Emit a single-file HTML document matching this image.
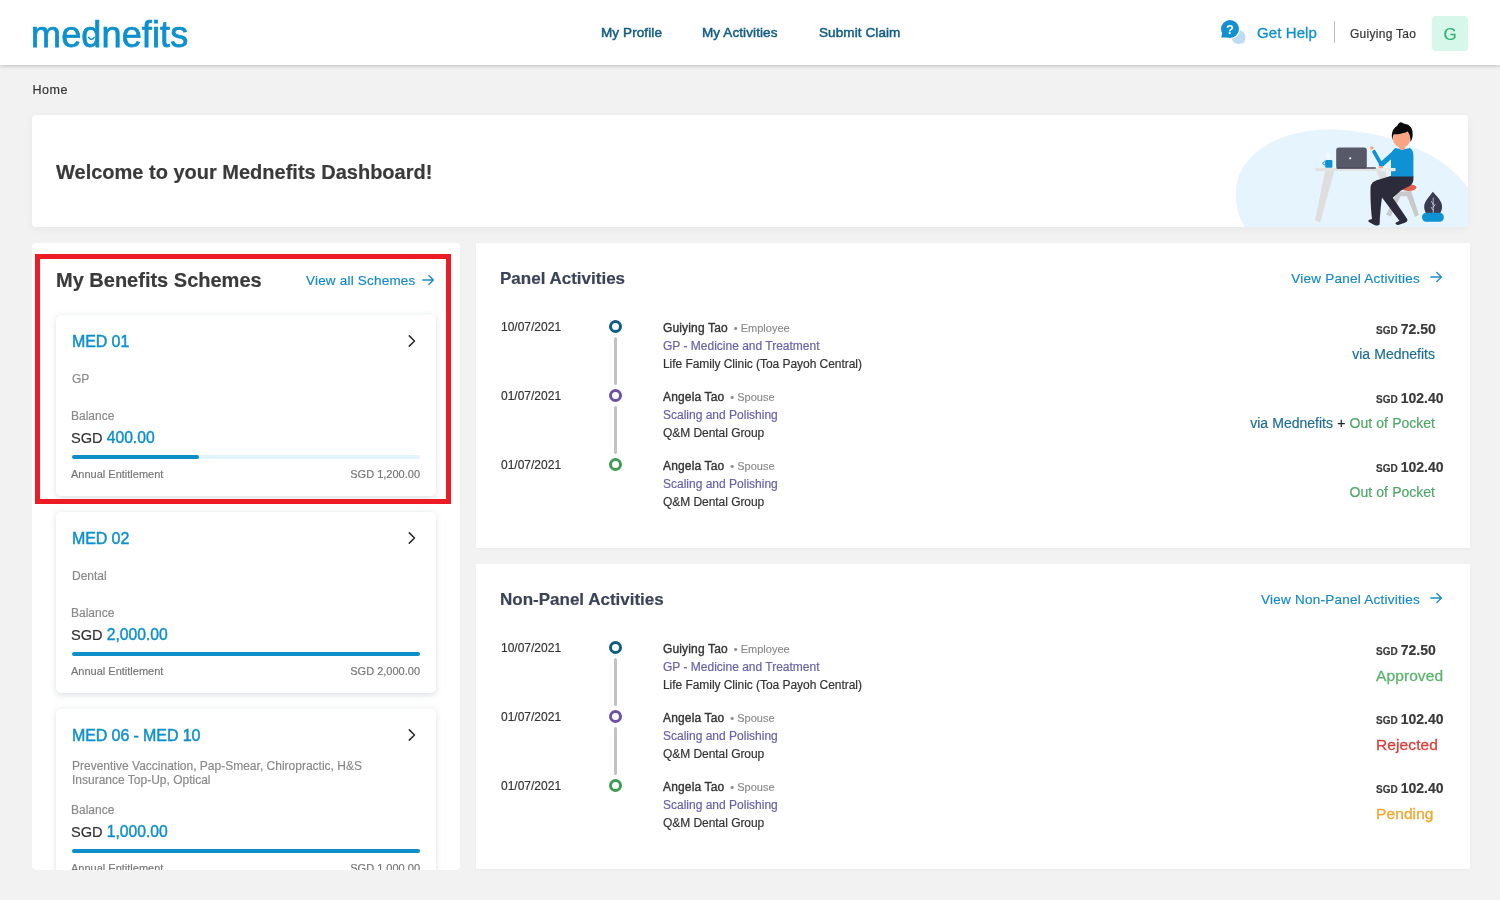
<!DOCTYPE html>
<html lang="en">
<head>
<meta charset="utf-8">
<title>Mednefits Dashboard</title>
<style>
*{box-sizing:border-box;margin:0;padding:0}
html,body{width:1500px;height:900px;overflow:hidden}
body{-webkit-text-stroke:.18px;background:#f2f2f2;font-family:"Liberation Sans",Arial,Helvetica,sans-serif;color:#333;position:relative;-webkit-font-smoothing:antialiased}
a{text-decoration:none;color:inherit}
#app{position:absolute;left:0;top:0;width:1500px;height:900px;will-change:transform}

/* header */
#hdr{position:absolute;left:0;top:0;width:1500px;height:65px;background:#fff;box-shadow:0 1px 4px rgba(0,0,0,.22)}
#logo{position:absolute;left:31px;top:13px;font-size:36px;line-height:44px;color:#0d90ce;letter-spacing:.15px;white-space:nowrap;-webkit-text-stroke:.75px #0d90ce}
#logo svg{position:absolute;left:0;top:0}
nav a{position:absolute;top:25px;font-size:13.5px;line-height:16px;color:#135e84;white-space:nowrap;letter-spacing:.1px;-webkit-text-stroke:.5px #135e84}
#help{position:absolute;left:1257px;top:23px;font-size:15px;line-height:20px;color:#0d90ce;white-space:nowrap;letter-spacing:.1px;-webkit-text-stroke:.3px #0d90ce}
#helpico{position:absolute;left:1216px;top:16px}
#sep{position:absolute;left:1334px;top:21px;width:1px;height:22px;background:#bdbdbd}
#uname{position:absolute;left:1350px;top:26px;font-size:12px;line-height:16px;color:#333;white-space:nowrap;letter-spacing:.27px}
#avatar{position:absolute;left:1432px;top:16px;width:36px;height:35px;border-radius:4px;background:#d6f7ea;color:#2fb46e;font-size:17px;line-height:37px;text-align:center}

#crumb{position:absolute;left:32.5px;top:82px;font-size:12.5px;line-height:16px;color:#333;letter-spacing:.5px}

/* banner */
#banner{position:absolute;left:32px;top:115px;width:1436px;height:112px;background:#fff;border-radius:4px;overflow:hidden;box-shadow:0 2px 8px rgba(0,0,0,.045)}
#banner h1{position:absolute;left:24px;top:45px;font-size:20px;line-height:24px;font-weight:bold;color:#3a3a3a;white-space:nowrap}
#banner svg{position:absolute;right:0;top:0}

/* left panel */
#left{position:absolute;left:32px;top:243px;width:428px;height:627px;background:#fff;border-radius:4px;overflow:hidden}
#left h2{position:absolute;left:24px;top:25px;font-size:20px;line-height:24px;font-weight:bold;color:#3a3a3a;white-space:nowrap}
#viewall{position:absolute;left:274px;top:29.6px;font-size:13.5px;line-height:16px;color:#168bc6;white-space:nowrap;letter-spacing:.2px}
.card{position:absolute;left:24px;width:380px;height:181px;background:#fff;border-radius:5px;box-shadow:0 1.5px 6px rgba(40,60,90,.16)}
.card .t{position:absolute;left:16px;top:18px;font-size:16px;line-height:18px;color:#0d90ce;white-space:nowrap;letter-spacing:-.1px;-webkit-text-stroke:.45px #0d90ce}
.card .chev{position:absolute;left:351px;top:19px}
.card .d{position:absolute;left:16px;top:57px;width:310px;font-size:12px;line-height:14px;color:#8a8a8a}
.card .bl{position:absolute;left:15px;top:94px;font-size:12px;line-height:14px;color:#8a8a8a}
.card .bv{position:absolute;left:15px;top:114px;font-size:14.6px;line-height:18px;color:#333;white-space:nowrap}
.card .bv b{font-weight:normal;font-size:15.7px;color:#0d90ce;-webkit-text-stroke:.4px #0d90ce}
.card .bar{position:absolute;left:16px;top:140px;width:348px;height:4px;border-radius:2px;background:#e3f5fc}
.card .bar i{position:absolute;left:0;top:0;height:4px;border-radius:2px;background:#0e8ec9}
.card .ae{position:absolute;left:15px;top:152px;font-size:11px;line-height:14px;color:#777}
.card .av{position:absolute;right:16px;top:152px;font-size:11px;line-height:14px;color:#777;white-space:nowrap}
#hl{position:absolute;left:35px;top:254px;width:416px;height:250px;border:5px solid #ed1c24;pointer-events:none}

/* right panels */
.panel{position:absolute;left:476px;width:994px;background:#fff;box-shadow:0 1px 3px rgba(0,0,0,.03)}
.panel h2{position:absolute;left:24px;top:26px;font-size:17px;line-height:20px;font-weight:bold;color:#3b4358;white-space:nowrap}
.arr{position:absolute}
.panel .va{position:absolute;right:50px;top:28px;font-size:13.5px;line-height:16px;color:#168bc6;white-space:nowrap;letter-spacing:.25px}
.row{position:absolute;left:0;width:994px;height:69px}
.row .dt{position:absolute;left:25px;top:-8px;font-size:12px;line-height:16px;color:#333}
.row .dot{position:absolute;left:133px;top:-7px;width:13px;height:13px;border-radius:50%;border:3.4px solid #0f5e82;background:#fff}
.row .ln{position:absolute;left:138px;top:10px;width:3px;height:48px;border-radius:2px;background:#c3c3c6}
.row .nm{position:absolute;left:187px;top:-7px;font-size:12px;line-height:16px;color:#333;white-space:nowrap;letter-spacing:.15px;-webkit-text-stroke:.38px #383838}
.row .nm span{font-size:11px;color:#8a8a8a;-webkit-text-stroke:.15px #8a8a8a;margin-left:6px;letter-spacing:0}
.row .sv{position:absolute;left:187px;top:11px;font-size:12px;line-height:16px;color:#6961ad;white-space:nowrap}
.row .cl{position:absolute;left:187px;top:29px;font-size:12px;line-height:16px;color:#333;white-space:nowrap;letter-spacing:-.05px}
.row .amt{position:absolute;left:900px;top:-7px;font-size:14px;line-height:18px;font-weight:bold;color:#3a3a3a;white-space:nowrap}
.row .amt small{font-size:10px;font-weight:bold;margin-right:3px}
.row .st{position:absolute;top:18px;font-size:14px;line-height:18px;white-space:nowrap}
.row .st.r{right:35px;word-spacing:.3px}
.row .st.l{left:900px;top:19px;font-size:15.5px;letter-spacing:.1px;-webkit-text-stroke:.3px currentColor}
.c-blue{color:#1d6d98}.c-green{color:#4ea768}.c-red{color:#d8413c}.c-org{color:#f0a72e}.c-grn2{color:#5bb56f}
</style>
</head>
<body>
<div id="app">

<header id="hdr">
  <div id="logo">mednefits<svg width="160" height="44" viewBox="0 0 160 44"><path d="M57.6 24.4Q60.4 28.6 63.2 24.4" fill="none" stroke="#0d90ce" stroke-width="1.5" stroke-linecap="round"/></svg></div>
  <nav>
    <a href="#" style="left:601px">My Profile</a>
    <a href="#" style="left:702px">My Activities</a>
    <a href="#" style="left:819px">Submit Claim</a>
  </nav>
  <svg id="helpico" width="34" height="32" viewBox="0 0 34 32"><circle cx="22.5" cy="21" r="7" fill="#bcdcf3"/><path d="M26 26 L28.6 27.8 L27.8 22 Z" fill="#bcdcf3"/><circle cx="14" cy="13" r="10.2" fill="#fff"/><circle cx="14" cy="13" r="9" fill="#1490d2"/><path d="M5.2 21.6 L6.6 15 L12 21.4 Z" fill="#1490d2"/><text x="14" y="17.6" font-family="Liberation Sans, sans-serif" font-size="13" font-weight="bold" fill="#fff" text-anchor="middle">?</text></svg>
  <a id="help" href="#">Get Help</a>
  <div id="sep"></div>
  <div id="uname">Guiying Tao</div>
  <div id="avatar">G</div>
</header>

<div id="crumb">Home</div>

<section id="banner">
  <h1>Welcome to your Mednefits Dashboard!</h1>
  <svg width="268" height="112" viewBox="1200 115 268 112">
    <path d="M1244 226C1236 212 1232 192 1240 173C1254 143 1294 129.3 1330 129.6C1372 130 1410 142 1440 161C1452 169 1462 179 1468 188L1468 227L1244.5 227Z" fill="#e5f4fd"/>
    <path d="M1325.1 170.7L1334.3 170.7L1320.2 222.6L1315.1 220.3Z" fill="#dedede"/>
    <path d="M1376.4 170.7L1385.4 170.7L1388.2 181.5L1380.5 181.5Z" fill="#dedede"/>
    <rect x="1315.3" y="167.9" width="76" height="3.2" rx="1.2" fill="#e2e2e2"/>
    <ellipse cx="1328" cy="155.5" rx="1.6" ry="3.6" fill="#fff" opacity=".55"/>
    <rect x="1325.2" y="160" width="7.2" height="7.8" rx="1" fill="#0f92d3"/>
    <circle cx="1324.4" cy="163.3" r="1.5" fill="none" stroke="#0f92d3" stroke-width="1"/>
    <rect x="1336.2" y="147.6" width="30.6" height="20.9" rx="2.6" fill="#575868"/>
    <rect x="1336.4" y="167.3" width="39.6" height="1.5" rx=".7" fill="#4b4c5b"/>
    <rect x="1349.3" y="157.4" width="1.8" height="1.8" fill="#fff"/>
    <path d="M1395.2 191.9L1411.1 190.9L1418.9 215.1L1415.0 216.8L1407.0 196.3L1400.6 196.3L1390.6 216.6L1386.2 214.6L1395.7 195.3Z" fill="#c9c9c9"/>
    <ellipse cx="1408.8" cy="187.6" rx="7.6" ry="3.3" fill="#e0604f"/>
    <path d="M1390.6 176.0L1413.4 176.0C1413.8 181.0 1412.8 184.0 1409.5 186.0L1401.0 190.4L1392.8 197.7L1407.2 219.0C1407.9 221.0 1407.0 221.9 1404.8 222.7L1398.2 224.9C1396.2 224.9 1395.0 223.9 1395.7 222.7L1399.4 220.7L1381.8 197.2C1380.8 194.8 1381.5 192.1 1383.5 190.4C1381.8 196.3 1380.5 208.5 1379.8 220.5L1379.6 224.6C1378.3 225.9 1375.9 225.6 1374.4 224.9L1368.8 221.9C1367.8 220.7 1368.6 219.7 1370.3 219.5L1372.0 219.0C1370.8 208.5 1370.3 196.3 1370.5 187.9C1370.8 183.4 1373.5 181.0 1378.3 179.8Z" fill="#2c2b3c"/>
    <path d="M1395.6 148.0C1399.7 149.3 1406.1 149.3 1409.7 148.0C1412.5 149.3 1413.4 152.1 1413.4 155.9L1413.4 176.6L1391.0 176.6L1391.0 158.5C1391.0 153.3 1392.7 149.5 1395.6 148.0Z" fill="#0f92d3"/>
    <rect x="1380" y="168.1" width="15.6" height="3.1" rx="1" fill="#ebebeb"/>
    <path d="M1396.1 151.3L1381.3 164.6" fill="none" stroke="#0f92d3" stroke-width="5" stroke-linecap="round"/>
    <path d="M1381.3 164.6L1374.1 151.8" fill="none" stroke="#0f92d3" stroke-width="3.7" stroke-linecap="round"/>
    <circle cx="1371.8" cy="148.0" r="1.8" fill="#f9a584"/>
    <ellipse cx="1380.8" cy="167.1" rx="2.6" ry="1.1" fill="#f9a584"/>
    <rect x="1399.2" y="143" width="6" height="7" rx="2.5" fill="#f9a584"/>
    <ellipse cx="1401.7" cy="138.6" rx="8.7" ry="8.9" fill="#f9a584"/>
    <path d="M1392.3 140.1C1391.0 134.2 1392.3 128.4 1397.1 125.9C1398.2 123.3 1400.3 121.6 1401.7 122.4C1403.8 123.9 1405.1 123.4 1406.3 124.2C1408.6 124.2 1412.0 127.1 1412.5 131.6C1413.2 136.1 1412.2 139.9 1410.4 142.1C1410.7 138.0 1409.9 134.2 1407.6 131.4C1402.2 134.2 1395.9 134.2 1393.8 134.2C1393.0 136.1 1392.5 138.0 1392.3 140.1Z" fill="#0b0b0d"/>
    <path d="M1432.9 191.7C1437.4 196.8 1442.1 201.3 1442.1 206.4C1442.1 210.2 1440.6 212.8 1439.3 214.1L1426.8 214.1C1425.3 212.4 1424.0 209.8 1424.2 206.0C1424.6 200.9 1429.1 196.8 1432.9 191.7Z" fill="#3b3a50"/>
    <path d="M1433.2 198.1L1433.2 213.4M1433.2 204.5L1431.4 201.4M1433.2 207.3L1435.0 204.5M1433.2 210.2L1431.1 207.3" fill="none" stroke="#e6e8f0" stroke-width=".7" stroke-linecap="round"/>
    <rect x="1422" y="212.8" width="21.8" height="9" rx="4.2" fill="#0f92d3"/>
  </svg>
</section>

<section id="left">
  <h2>My Benefits Schemes</h2>
  <a id="viewall" href="#">View all Schemes</a><svg class="arr" style="left:390px;top:31px" width="13" height="12" viewBox="0 0 13 12"><path d="M.8 6H11.3M6.8 1.4L11.4 6L6.8 10.6" fill="none" stroke="#1f8dc6" stroke-width="1.35" stroke-linecap="round" stroke-linejoin="round"/></svg>

  <div class="card" style="top:72px">
    <div class="t">MED 01</div><svg class="chev" width="10" height="14" viewBox="0 0 10 14"><path d="M2.3 1.9L7.5 7L2.3 12.1" fill="none" stroke="#2a2a2a" stroke-width="1.5" stroke-linecap="round" stroke-linejoin="round"/></svg>
    <div class="d">GP</div>
    <div class="bl">Balance</div>
    <div class="bv">SGD <b>400.00</b></div>
    <div class="bar"><i style="width:127px"></i></div>
    <div class="ae">Annual Entitlement</div>
    <div class="av">SGD 1,200.00</div>
  </div>
  <div class="card" style="top:269px">
    <div class="t">MED 02</div><svg class="chev" width="10" height="14" viewBox="0 0 10 14"><path d="M2.3 1.9L7.5 7L2.3 12.1" fill="none" stroke="#2a2a2a" stroke-width="1.5" stroke-linecap="round" stroke-linejoin="round"/></svg>
    <div class="d">Dental</div>
    <div class="bl">Balance</div>
    <div class="bv">SGD <b>2,000.00</b></div>
    <div class="bar"><i style="width:348px"></i></div>
    <div class="ae">Annual Entitlement</div>
    <div class="av">SGD 2,000.00</div>
  </div>
  <div class="card" style="top:466px">
    <div class="t">MED 06 - MED 10</div><svg class="chev" width="10" height="14" viewBox="0 0 10 14"><path d="M2.3 1.9L7.5 7L2.3 12.1" fill="none" stroke="#2a2a2a" stroke-width="1.5" stroke-linecap="round" stroke-linejoin="round"/></svg>
    <div class="d" style="top:50px">Preventive Vaccination, Pap-Smear, Chiropractic, H&amp;S Insurance Top-Up, Optical</div>
    <div class="bl">Balance</div>
    <div class="bv">SGD <b>1,000.00</b></div>
    <div class="bar"><i style="width:348px"></i></div>
    <div class="ae">Annual Entitlement</div>
    <div class="av">SGD 1,000.00</div>
  </div>
</section>
<div id="hl"></div>

<section class="panel" style="top:243px;height:305px">
  <h2>Panel Activities</h2>
  <a class="va" href="#">View Panel Activities</a><svg class="arr" style="left:954px;top:28.4px" width="13" height="12" viewBox="0 0 13 12"><path d="M.8 6H11.3M6.8 1.4L11.4 6L6.8 10.6" fill="none" stroke="#1f8dc6" stroke-width="1.35" stroke-linecap="round" stroke-linejoin="round"/></svg>
  <div class="row" style="top:84px">
    <div class="dt">10/07/2021</div><div class="dot"></div><div class="ln"></div>
    <div class="nm">Guiying Tao<span>• Employee</span></div>
    <div class="sv">GP - Medicine and Treatment</div>
    <div class="cl">Life Family Clinic (Toa Payoh Central)</div>
    <div class="amt"><small>SGD</small>72.50</div>
    <div class="st r c-blue">via Mednefits</div>
  </div>
  <div class="row" style="top:153px">
    <div class="dt">01/07/2021</div><div class="dot" style="border-color:#6b52a3"></div><div class="ln"></div>
    <div class="nm">Angela Tao<span>• Spouse</span></div>
    <div class="sv">Scaling and Polishing</div>
    <div class="cl">Q&amp;M Dental Group</div>
    <div class="amt"><small>SGD</small>102.40</div>
    <div class="st r"><span class="c-blue">via Mednefits</span> <span style="color:#222">+</span> <span class="c-green">Out of Pocket</span></div>
  </div>
  <div class="row" style="top:222px">
    <div class="dt">01/07/2021</div><div class="dot" style="border-color:#3f9c56"></div>
    <div class="nm">Angela Tao<span>• Spouse</span></div>
    <div class="sv">Scaling and Polishing</div>
    <div class="cl">Q&amp;M Dental Group</div>
    <div class="amt"><small>SGD</small>102.40</div>
    <div class="st r c-green">Out of Pocket</div>
  </div>
</section>

<section class="panel" style="top:564px;height:305px">
  <h2>Non-Panel Activities</h2>
  <a class="va" href="#">View Non-Panel Activities</a><svg class="arr" style="left:954px;top:28.4px" width="13" height="12" viewBox="0 0 13 12"><path d="M.8 6H11.3M6.8 1.4L11.4 6L6.8 10.6" fill="none" stroke="#1f8dc6" stroke-width="1.35" stroke-linecap="round" stroke-linejoin="round"/></svg>
  <div class="row" style="top:84px">
    <div class="dt">10/07/2021</div><div class="dot"></div><div class="ln"></div>
    <div class="nm">Guiying Tao<span>• Employee</span></div>
    <div class="sv">GP - Medicine and Treatment</div>
    <div class="cl">Life Family Clinic (Toa Payoh Central)</div>
    <div class="amt"><small>SGD</small>72.50</div>
    <div class="st l c-grn2">Approved</div>
  </div>
  <div class="row" style="top:153px">
    <div class="dt">01/07/2021</div><div class="dot" style="border-color:#6b52a3"></div><div class="ln"></div>
    <div class="nm">Angela Tao<span>• Spouse</span></div>
    <div class="sv">Scaling and Polishing</div>
    <div class="cl">Q&amp;M Dental Group</div>
    <div class="amt"><small>SGD</small>102.40</div>
    <div class="st l c-red">Rejected</div>
  </div>
  <div class="row" style="top:222px">
    <div class="dt">01/07/2021</div><div class="dot" style="border-color:#3f9c56"></div>
    <div class="nm">Angela Tao<span>• Spouse</span></div>
    <div class="sv">Scaling and Polishing</div>
    <div class="cl">Q&amp;M Dental Group</div>
    <div class="amt"><small>SGD</small>102.40</div>
    <div class="st l c-org">Pending</div>
  </div>
</section>

</div>
</body>
</html>
